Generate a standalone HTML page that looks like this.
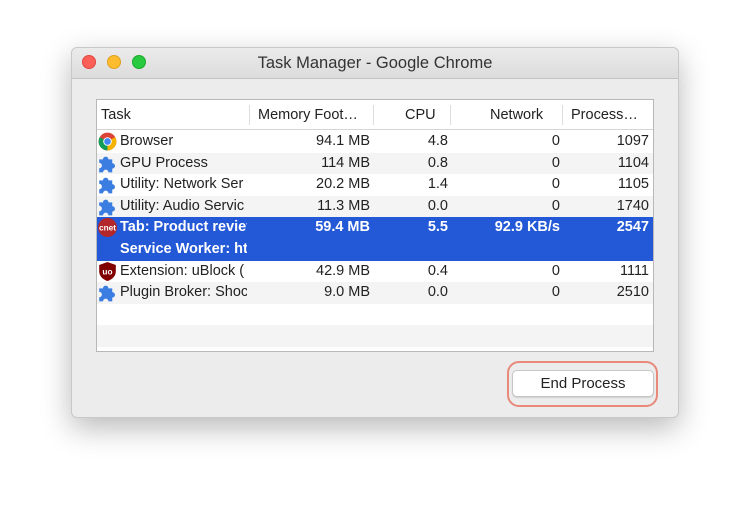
<!DOCTYPE html>
<html><head><style>
*{margin:0;padding:0;box-sizing:border-box}
body{width:750px;height:512px;background:#fff;font-family:"Liberation Sans",sans-serif;font-size:14.5px;color:#222;position:relative;overflow:hidden}
.win{position:absolute;left:71px;top:47px;width:608px;height:371px;background:#ececec;border:1px solid #c8c8c8;border-radius:6px;box-shadow:0 10px 30px rgba(0,0,0,.28)}
.tb{position:absolute;left:0;top:0;width:100%;height:31px;background:linear-gradient(#ebebeb,#dcdcdc);border-bottom:1px solid #c4c4c4;border-radius:6px 6px 0 0;text-align:center;line-height:31px;font-size:16.5px;color:#333}
.d{position:absolute;top:7px;width:14px;height:14px;border-radius:50%}
.tbl{position:absolute;left:96px;top:99px;width:558px;height:253px;border:1px solid #b8b8b8;background:#fff;overflow:hidden}
.hd{position:absolute;left:0;top:0;width:100%;height:30px;background:#fff;border-bottom:1px solid #d5d5d5}
.c{position:absolute;white-space:nowrap;overflow:hidden}
.sep{position:absolute;top:5px;width:1px;height:20px;background:#ddd}
.r{position:absolute;left:0;width:100%;height:21.6px;line-height:21.6px}
.alt{background:#f4f4f4}
.sel{background:#2359d6;color:#fff}
.ic{position:absolute;left:1px;width:19px;height:19px}
</style></head><body>
<div class="win">
 <div class="tb">Task Manager - Google Chrome
  <div class="d" style="left:10px;background:#fc5f57;border:1px solid #e0443e"></div>
  <div class="d" style="left:35px;background:#fdbc2e;border:1px solid #dea123"></div>
  <div class="d" style="left:60px;background:#29c940;border:1px solid #1aab29"></div>
 </div>
</div>
<div class="tbl">
 <div class="hd">
  <div class="c" style="left:4px;top:7px">Task</div>
  <div class="sep" style="left:152px"></div>
  <div class="c" style="left:161px;top:7px">Memory Foot…</div>
  <div class="sep" style="left:276px"></div>
  <div class="c" style="left:308px;top:7px">CPU</div>
  <div class="sep" style="left:353px"></div>
  <div class="c" style="left:393px;top:7px">Network</div>
  <div class="sep" style="left:465px"></div>
  <div class="c" style="left:474px;top:7px">Process…</div>
 </div>
 <div id="rows"></div>
</div>
<div style="position:absolute;left:507px;top:361px;width:151px;height:46px;border:2px solid #e8897a;border-radius:12px"></div>
<div style="position:absolute;left:512px;top:370px;width:142px;height:27px;background:#fff;border:1px solid #c6c6c6;border-radius:5px;box-shadow:0 1px 1px rgba(0,0,0,.12);text-align:center;line-height:26px;font-size:15px;color:#222">End Process</div>
<script>
const puzzle='<svg class="ic" viewBox="0 0 16 16" style="top:1px"><path fill="#3b7de0" d="M1 4.5h3.2a2.3 2.3 0 1 1 4.6 0H12v3.2a2.3 2.3 0 1 1 0 4.6V15.5H8.8a2.3 2.3 0 1 0-4.6 0H1v-3.5a2.3 2.3 0 1 0 0-4.6z"/></svg>';
const chrome='<svg class="ic" viewBox="0 0 16 16" style="top:1px"><circle cx="8" cy="8" r="7.5" fill="#db4437"/><path d="M8 8L1.5 4.3A7.5 7.5 0 0 0 8 15.5z" fill="#0f9d58"/><path d="M8 8L8 15.5A7.5 7.5 0 0 0 14.5 4.3z" fill="#f4b400"/><circle cx="8" cy="8" r="3.6" fill="#fff"/><circle cx="8" cy="8" r="2.8" fill="#4285f4"/></svg>';
const cnet='<svg class="ic" viewBox="0 0 16 16" style="top:1px"><circle cx="8" cy="8" r="8" fill="#b3262a"/><text x="8" y="10.5" font-size="7" fill="#fff" text-anchor="middle" font-family="Liberation Sans" font-weight="bold">cnet</text></svg>';
const ub='<svg class="ic" viewBox="0 0 16 16" style="top:1px"><path d="M8 0L15 2.5V8c0 4-3.5 7-7 8C4.5 15 1 12 1 8V2.5z" fill="#800000"/><text x="8" y="10.5" font-size="7" fill="#fff" text-anchor="middle" font-family="Liberation Sans" font-weight="bold">uo</text></svg>';
const rows=[
[chrome,'Browser','94.1 MB','4.8','0','1097',0],
[puzzle,'GPU Process','114 MB','0.8','0','1104',1],
[puzzle,'Utility: Network Ser','20.2 MB','1.4','0','1105',0],
[puzzle,'Utility: Audio Servic','11.3 MB','0.0','0','1740',1],
[cnet,'Tab: Product reviev','59.4 MB','5.5','92.9 KB/s','2547',2],
['','Service Worker: htt','','','','',2],
[ub,'Extension: uBlock (','42.9 MB','0.4','0','1111',0],
[puzzle,'Plugin Broker: Shoc','9.0 MB','0.0','0','2510',1],
['','','','','','',0],['','','','','','',1]];
let h='';rows.forEach((r,i)=>{const t=31+i*21.6;const cls=r[6]==2?'sel':r[6]==1?'alt':'';const fw=r[6]==2?'font-weight:bold;':'';
h+=`<div class="r ${cls}" style="top:${t}px;${fw}">${r[0]}<div class="c" style="left:23px;width:127px">${r[1]}</div><div class="c" style="right:283px">${r[2]}</div><div class="c" style="right:205px">${r[3]}</div><div class="c" style="right:93px">${r[4]}</div><div class="c" style="right:4px">${r[5]}</div></div>`});
document.getElementById('rows').innerHTML=h;
</script>
</body></html>
